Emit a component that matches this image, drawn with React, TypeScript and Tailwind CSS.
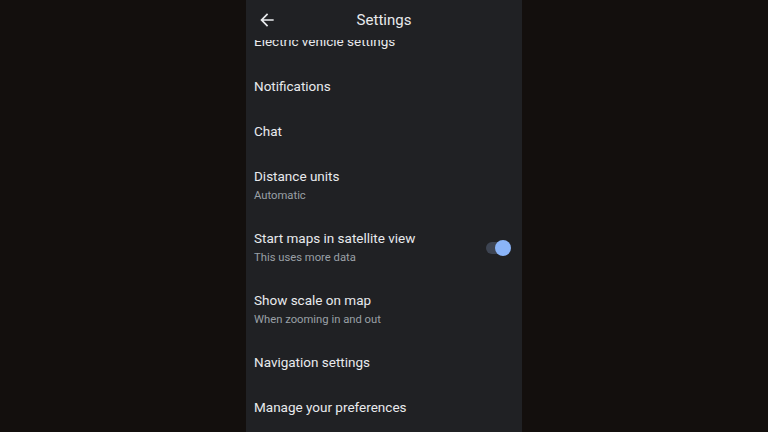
import React from "react";

type Row = { title: string; sub?: string; toggle?: boolean };

const rows: Row[] = [
  { title: "Electric vehicle settings" },
  { title: "Notifications" },
  { title: "Chat" },
  { title: "Distance units", sub: "Automatic" },
  { title: "Start maps in satellite view", sub: "This uses more data", toggle: true },
  { title: "Show scale on map", sub: "When zooming in and out" },
  { title: "Navigation settings" },
  { title: "Manage your preferences" },
];

export default function App() {
  return (
    <div
      className="w-[768px] h-[432px] bg-[#130f0d] flex justify-center overflow-hidden"
      style={{ fontFamily: "Roboto, 'Noto Sans', sans-serif" }}
    >
      <div className="w-[276px] h-full bg-[#202124] flex flex-col">
        {/* Header */}
        <div className="h-[40px] shrink-0 flex items-center">
          <div className="w-[40px] pl-[11px] flex">
            <svg width="20" height="20" viewBox="0 0 24 24" className="text-[#e8eaed]">
              <path
                d="M20 11H7.83l5.59-5.59L12 4l-8 8 8 8 1.41-1.41L7.83 13H20v-2z"
                fill="currentColor"
              />
            </svg>
          </div>
          <div className="flex-1 text-center text-[15px] text-[#e8eaed] pr-[40px]">Settings</div>
        </div>

        {/* List */}
        <div className="flex-1 overflow-hidden">
          <div className="-mt-[21.5px]">
            {rows.map((r) => (
              <div
                key={r.title}
                className={`flex items-center pl-[8px] pr-[11px] ${r.sub ? "h-[62px] pt-[2px]" : "h-[45px]"}`}
              >
                <div className="flex-1 flex flex-col justify-center">
                  <div className="text-[13.5px] leading-[18px] text-[#e8eaed]">{r.title}</div>
                  {r.sub && (
                    <div className="text-[11.25px] leading-[18px] pt-[2px] text-[#9aa0a6]">{r.sub}</div>
                  )}
                </div>
                {r.toggle && (
                  <div className="relative w-[25px] h-[16px] flex items-center">
                    <div className="w-[21px] h-[12px] rounded-full bg-[#3d4452]" />
                    <div className="absolute right-0 top-0 w-[16px] h-[16px] rounded-full bg-[#8ab4f8]" />
                  </div>
                )}
              </div>
            ))}
          </div>
        </div>
      </div>
    </div>
  );
}
